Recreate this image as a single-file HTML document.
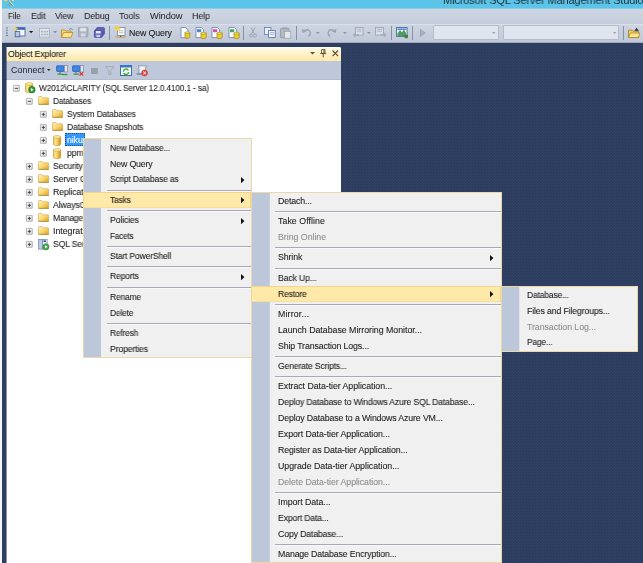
<!DOCTYPE html>
<html lang="en"><head><meta charset="utf-8"><title>Microsoft SQL Server Management Studio</title>
<style>
html,body{margin:0;padding:0;background:#2b3c5e;}
body{width:643px;height:563px;overflow:hidden;position:relative;font-family:"Liberation Sans",sans-serif;font-size:8.8px;color:#1b1b1b;}
#app{position:absolute;left:0;top:0;width:643px;height:563px;overflow:hidden;background-color:#2b3c5e;
 background-image:radial-gradient(circle at 25% 25%, rgba(74,94,130,0.22) 0.4px, rgba(0,0,0,0) 0.9px),radial-gradient(circle at 75% 75%, rgba(74,94,130,0.22) 0.4px, rgba(0,0,0,0) 0.9px);background-size:3px 3px;}
.t{position:absolute;transform-origin:0 50%;white-space:pre;line-height:12px;height:12px;will-change:transform;-webkit-text-stroke:0.09px currentColor;}
.ic{position:absolute;overflow:visible;}
.lb{position:absolute;left:0;top:0;width:2px;height:563px;background:#f4f6f9;}
.titlebar{position:absolute;left:2px;top:0;right:0;height:9px;background:linear-gradient(#5cc4e8 8px,#86cde6 8px);}
.appico{position:absolute;left:3px;top:0;width:14px;height:8px;}
.menubar{position:absolute;left:2px;top:9px;right:0;height:34px;background:linear-gradient(#d0d7e3,#c4cbda 15px,#c2c9d8 33px,#a3acc0 33px);}
.toolbar{position:absolute;left:3px;top:24px;right:0;height:19px;border-radius:2px 0 0 2px;background:linear-gradient(#dae0ea 1px,#cdd4e1 1px,#c1c9d9 18px,#a3acc0 18px);}
.vsep{position:absolute;width:1px;background:#8791a6;}
.combo{position:absolute;top:25px;height:15px;background:#dfe4ee;border:0.7px solid #b4bccb;box-sizing:border-box;border-radius:1px;}
.oe{position:absolute;left:6px;top:47px;width:335px;height:520px;background:#fff;border-radius:2px 2px 0 0;overflow:hidden;}
.oel{position:absolute;left:6px;top:48px;width:1px;height:520px;background:#2a3a5c;opacity:.55;z-index:1;}
.oetitle{position:absolute;left:0;top:0;right:0;height:14px;background:linear-gradient(#fffcf0,#fff3cd 45%,#ffe8a6);}
.oetb{position:absolute;left:0;top:14px;right:0;height:19px;background:linear-gradient(#bec8da 18px,#b4bccb 18px);}
.tree{position:absolute;left:0;top:33px;right:0;bottom:0;background:#fff;}
.sel{position:absolute;background:#3399ff;outline:1px dotted #1d4f8f;outline-offset:-1px;}
.menu{position:absolute;background:#f0f0f0;box-sizing:border-box;border:1px solid #ead9a4;}
.mg{position:absolute;background:#bcc7d9;}
.sep{position:absolute;height:1px;background:#a4aab8;box-shadow:0 1px 0 rgba(255,255,255,.55);}
.hl{position:absolute;height:16px;background:#ffe9a8;border:1px solid #f2d58c;border-bottom-color:rgba(242,213,140,.55);box-sizing:border-box;}
</style></head>
<body><svg width="0" height="0" style="position:absolute"><defs><linearGradient id="gf" x1="0" y1="0" x2="1" y2="1"><stop offset="0" stop-color="#fff3c0"/><stop offset="0.5" stop-color="#fbd870"/><stop offset="1" stop-color="#dc9d2a"/></linearGradient><linearGradient id="gd" x1="0" y1="0" x2="1" y2="0"><stop offset="0" stop-color="#eebb44"/><stop offset="0.3" stop-color="#fbe7a0"/><stop offset="0.62" stop-color="#f0c048"/><stop offset="1" stop-color="#c98a18"/></linearGradient><linearGradient id="ge" x1="0" y1="0" x2="1" y2="1"><stop offset="0" stop-color="#ffffff"/><stop offset="1" stop-color="#d6d6d6"/></linearGradient></defs></svg><div id="app"><div class="lb"></div><div class="titlebar"></div><div class="appico"><svg width="14" height="8" viewBox="0 0 14 8"><rect x="1" y="0" width="3.4" height="1.2" fill="#e8d36a"/><path d="M1.4 3 V5.4" stroke="#7fd0a0" stroke-width="0.8" stroke-dasharray="0.8 0.8"/><path d="M5.6 5.4 L10 0.2" stroke="#b79a45" stroke-width="1.3"/><path d="M9.4 0.6 L10.4 -0.4" stroke="#f4f8fa" stroke-width="1.6"/><path d="M6.4 0.8 L10.4 5.6" stroke="#eef4f7" stroke-width="1"/><path d="M6 1.6 L9.6 5.8" stroke="#3a6a80" stroke-width="0.5"/></svg></div><span class="t" style="left:442.70px;top:-6.00px;letter-spacing:-0.16px;color:#1c2f3a;font-size:11.2px;transform:scaleX(0.9839);-webkit-text-stroke:0;">Microsoft SQL Server Management Studio</span><div class="menubar"></div><span class="t" style="left:7.50px;top:10.00px;letter-spacing:-0.16px;font-size:9.3px;transform:scaleX(0.8784);-webkit-text-stroke:0;">File</span><span class="t" style="left:30.50px;top:10.00px;letter-spacing:-0.16px;font-size:9.3px;transform:scaleX(0.9486);-webkit-text-stroke:0;">Edit</span><span class="t" style="left:55.10px;top:10.00px;letter-spacing:-0.16px;font-size:9.3px;transform:scaleX(0.9512);-webkit-text-stroke:0;">View</span><span class="t" style="left:83.50px;top:10.00px;letter-spacing:-0.16px;font-size:9.3px;transform:scaleX(0.9622);-webkit-text-stroke:0;">Debug</span><span class="t" style="left:119.00px;top:10.00px;letter-spacing:-0.16px;font-size:9.3px;transform:scaleX(0.9759);-webkit-text-stroke:0;">Tools</span><span class="t" style="left:149.60px;top:10.00px;letter-spacing:-0.113px;font-size:9.3px;-webkit-text-stroke:0;">Window</span><span class="t" style="left:191.50px;top:10.00px;letter-spacing:-0.16px;font-size:9.3px;transform:scaleX(0.9684);-webkit-text-stroke:0;">Help</span><div class="toolbar"></div><svg class="ic" style="left:5.6px;top:27.2px" width="2" height="10" viewBox="0 0 2 10"><rect x="0.3" y="0.3" width="1.3" height="1.3" fill="#5d6b85"/><rect x="0.3" y="2.8" width="1.3" height="1.3" fill="#5d6b85"/><rect x="0.3" y="5.3" width="1.3" height="1.3" fill="#5d6b85"/><rect x="0.3" y="7.8" width="1.3" height="1.3" fill="#5d6b85"/></svg><svg class="ic" style="left:13px;top:26.4px" width="12.5" height="11.5" viewBox="0 0 12.5 11.5"><rect x="3" y="1.6" width="9" height="8.4" fill="#f4f7fc" stroke="#4d6ea8" stroke-width="0.9"/><rect x="3" y="1.6" width="9" height="2.2" fill="#3a66b5"/><rect x="2.2" y="5.6" width="4.6" height="5.2" fill="#b7c6e6" stroke="#4b5f94" stroke-width="0.8"/><path d="M2.6 0 L3.5 1.9 L5.4 2.6 L3.5 3.4 L2.6 5.2 L1.8 3.4 L0 2.6 L1.8 1.9 Z" fill="#f6cf4a"/></svg><svg class="ic" style="left:28.9px;top:31.050000000000004px" width="4.2" height="2.3" viewBox="0 0 4.2 2.3"><path d="M0 0 H4.2 L2.1 2.3 Z" fill="#1b1b1b"/></svg><svg class="ic" style="left:38.5px;top:27.8px" width="11" height="9.6" viewBox="0 0 11 9.6"><rect x="0.4" y="0.4" width="10.2" height="8.8" fill="#dfe3ea" stroke="#a9b0be" stroke-width="0.8"/><g fill="#a3aab8"><rect x="2" y="3" width="1.8" height="1.4"/><rect x="4.8" y="3" width="1.8" height="1.4"/><rect x="7.5" y="3" width="1.8" height="1.4"/><rect x="2" y="5.8" width="1.8" height="1.4"/><rect x="4.8" y="5.8" width="1.8" height="1.4"/><rect x="7.5" y="5.8" width="1.8" height="1.4"/></g></svg><svg class="ic" style="left:52.699999999999996px;top:31.050000000000004px" width="4.2" height="2.3" viewBox="0 0 4.2 2.3"><path d="M0 0 H4.2 L2.1 2.3 Z" fill="#8b93a3"/></svg><svg class="ic" style="left:61px;top:26.6px" width="12.5" height="11.2" viewBox="0 0 12.5 11.2"><path d="M0.5 10.5 V3 H4 L5 4 H10 V5.5" fill="#f5d572" stroke="#b98a2a" stroke-width="0.8"/><path d="M0.5 10.5 L2.6 5.5 H12 L10 10.5 Z" fill="#fbe28d" stroke="#b98a2a" stroke-width="0.8"/><path d="M8.2 2.4 Q10 0.4 11.6 2.6" fill="none" stroke="#5b7fb8" stroke-width="0.9"/></svg><svg class="ic" style="left:78px;top:27.4px" width="10.4" height="10.2" viewBox="0 0 10.4 10.2"><rect x="0.4" y="0.4" width="9.6" height="9.4" rx="0.8" fill="#aeb4c0" stroke="#9198a6" stroke-width="0.7"/><rect x="2.2" y="0.8" width="6" height="3.6" fill="#e2e5ea"/><rect x="2.8" y="6.2" width="4.8" height="3.4" fill="#d2d6dd"/></svg><svg class="ic" style="left:93.6px;top:26.8px" width="11" height="11" viewBox="0 0 11 11"><rect x="2.6" y="0.6" width="7.8" height="7" rx="0.8" fill="#6d74c9" stroke="#3c3f94" stroke-width="0.7"/><rect x="1.4" y="2" width="7.8" height="7" rx="0.8" fill="#7a82d6" stroke="#3c3f94" stroke-width="0.7"/><rect x="0.4" y="3.4" width="7.8" height="7" rx="0.8" fill="#6a72cc" stroke="#33368a" stroke-width="0.7"/><rect x="2" y="4" width="4.6" height="2.4" fill="#e8eaf8"/><rect x="2.4" y="8" width="3.6" height="2.2" fill="#c9cdef"/></svg><div class="vsep" style="left:108.9px;top:26px;height:13.5px"></div><svg class="ic" style="left:113.6px;top:26.2px" width="12.6" height="12.4" viewBox="0 0 12.6 12.4"><rect x="3.4" y="1.6" width="7.6" height="8" fill="#f7f8fb" stroke="#7d8594" stroke-width="0.8"/><path d="M5 4.6 H9.5 M5 6.4 H9.5" stroke="#a8afbd" stroke-width="0.7"/><circle cx="3.4" cy="2.6" r="2.5" fill="#f7d23e"/><path d="M1.4 11 H12 " stroke="#c89a2c" stroke-width="1"/><path d="M6.6 9.6 V11" stroke="#555" stroke-width="1"/></svg><svg class="ic" style="left:180px;top:26.6px" width="10.4" height="11.6" viewBox="0 0 10.4 11.6"><path d="M1 0.5 H5.6 L8 2.9 V10.8 H1 Z" fill="#fbfcfe" stroke="#6d7fa6" stroke-width="0.8"/><path d="M5 5.6 h4.8 v4.6 a2.4 1 0 0 1 -4.8 0 Z" fill="#f0cf1e" stroke="#8a7412" stroke-width="0.6"/><ellipse cx="7.4" cy="5.8" rx="2.4" ry="1" fill="#fbe96a" stroke="#8a7412" stroke-width="0.5"/></svg><svg class="ic" style="left:195px;top:26.6px" width="12" height="11.6" viewBox="0 0 12 11.6"><path d="M1 0.5 H6.4 L8.6 2.7 V10.6 H1 Z" fill="#fbfcfe" stroke="#6d7fa6" stroke-width="0.8"/><rect x="2" y="2.2" width="4.2" height="3" fill="#4a86d8"/><path d="M6 6.2 h5.2 v4.4 a2.6 1 0 0 1 -5.2 0 Z" fill="#f0cf1e" stroke="#8a7412" stroke-width="0.6"/><ellipse cx="8.6" cy="6.2" rx="2.6" ry="1" fill="#fbe96a" stroke="#8a7412" stroke-width="0.5"/></svg><svg class="ic" style="left:211.2px;top:26.6px" width="12" height="11.6" viewBox="0 0 12 11.6"><path d="M1 0.5 H6.4 L8.6 2.7 V10.6 H1 Z" fill="#fbfcfe" stroke="#6d7fa6" stroke-width="0.8"/><rect x="2" y="2.2" width="4.2" height="3" fill="#d64bc0"/><path d="M6 6.2 h5.2 v4.4 a2.6 1 0 0 1 -5.2 0 Z" fill="#f0cf1e" stroke="#8a7412" stroke-width="0.6"/><ellipse cx="8.6" cy="6.2" rx="2.6" ry="1" fill="#fbe96a" stroke="#8a7412" stroke-width="0.5"/></svg><svg class="ic" style="left:227.8px;top:26.6px" width="12" height="11.6" viewBox="0 0 12 11.6"><path d="M1 0.5 H6.4 L8.6 2.7 V10.6 H1 Z" fill="#fbfcfe" stroke="#6d7fa6" stroke-width="0.8"/><rect x="2" y="2.2" width="4.2" height="3" fill="#4ea65a"/><path d="M6 6.2 h5.2 v4.4 a2.6 1 0 0 1 -5.2 0 Z" fill="#f0cf1e" stroke="#8a7412" stroke-width="0.6"/><ellipse cx="8.6" cy="6.2" rx="2.6" ry="1" fill="#fbe96a" stroke="#8a7412" stroke-width="0.5"/></svg><div class="vsep" style="left:242.8px;top:26px;height:13.5px"></div><svg class="ic" style="left:249.4px;top:27px" width="8" height="11" viewBox="0 0 8 11"><path d="M2 0.5 L5.4 7 M6 0.5 L2.6 7" stroke="#9aa1af" stroke-width="0.9" fill="none"/><circle cx="2" cy="8.6" r="1.5" fill="none" stroke="#9aa1af" stroke-width="0.9"/><circle cx="6" cy="8.6" r="1.5" fill="none" stroke="#9aa1af" stroke-width="0.9"/></svg><svg class="ic" style="left:264px;top:27px" width="12" height="11" viewBox="0 0 12 11"><rect x="0.5" y="0.5" width="6.4" height="7" fill="#e9edf5" stroke="#5f7fb5" stroke-width="0.8"/><rect x="4.6" y="3.4" width="6.6" height="7" fill="#f3f6fb" stroke="#4c6ea8" stroke-width="0.8"/><path d="M6 5.6 H10 M6 7.4 H10" stroke="#7d9acb" stroke-width="0.7"/></svg><svg class="ic" style="left:280.4px;top:26.6px" width="11.4" height="11.6" viewBox="0 0 11.4 11.6"><rect x="0.5" y="1.4" width="8.6" height="9.4" rx="0.8" fill="#b5b9c2" stroke="#8e95a3" stroke-width="0.8"/><rect x="2.6" y="0.4" width="4.4" height="2" fill="#9da3b0"/><rect x="4.6" y="4.4" width="6.2" height="6.8" fill="#e6e8ee" stroke="#979dac" stroke-width="0.7"/></svg><div class="vsep" style="left:295.79999999999995px;top:26px;height:13.5px"></div><svg class="ic" style="left:301.6px;top:28px" width="9.4" height="9" viewBox="0 0 9.4 9"><path d="M1 3.4 Q5 0.4 7.6 3 Q9.4 5.6 6.4 8.4" fill="none" stroke="#9aa2b2" stroke-width="1.3"/><path d="M0 0.8 L0.6 5 L4.4 3.6 Z" fill="#9aa2b2"/></svg><svg class="ic" style="left:315.70000000000005px;top:31.55px" width="3.8" height="2.1" viewBox="0 0 3.8 2.1"><path d="M0 0 H3.8 L1.9 2.1 Z" fill="#8b93a3"/></svg><svg class="ic" style="left:327.2px;top:28px" width="9.4" height="9" viewBox="0 0 9.4 9"><path d="M8.4 3.4 Q4.4 0.4 1.8 3 Q0 5.6 3 8.4" fill="none" stroke="#9aa2b2" stroke-width="1.3"/><path d="M9.4 0.8 L8.8 5 L5 3.6 Z" fill="#9aa2b2"/></svg><svg class="ic" style="left:343.3px;top:31.55px" width="3.8" height="2.1" viewBox="0 0 3.8 2.1"><path d="M0 0 H3.8 L1.9 2.1 Z" fill="#8b93a3"/></svg><svg class="ic" style="left:352px;top:27px" width="12" height="11" viewBox="0 0 12 11"><rect x="3.4" y="0.5" width="7.6" height="7.6" fill="#d9dde6" stroke="#99a0b0" stroke-width="0.8"/><path d="M0.4 8 L3.6 5.4 V7 H7 V9 H3.6 V10.6 Z" fill="#a7aebd"/><path d="M5 2.4 H9.4 M5 4.2 H9.4" stroke="#a0a7b6" stroke-width="0.7"/></svg><svg class="ic" style="left:367.1px;top:31.55px" width="3.8" height="2.1" viewBox="0 0 3.8 2.1"><path d="M0 0 H3.8 L1.9 2.1 Z" fill="#8b93a3"/></svg><svg class="ic" style="left:375px;top:27px" width="12.4" height="11" viewBox="0 0 12.4 11"><rect x="0.5" y="0.5" width="8" height="7.6" fill="#d9dde6" stroke="#99a0b0" stroke-width="0.8"/><path d="M12 8 L8.8 5.4 V7 H5.4 V9 H8.8 V10.6 Z" fill="#a7aebd"/><path d="M2 2.4 H7 M2 4.2 H7" stroke="#a0a7b6" stroke-width="0.7"/></svg><div class="vsep" style="left:390.9px;top:26px;height:13.5px"></div><svg class="ic" style="left:396px;top:26.8px" width="12.4" height="11.6" viewBox="0 0 12.4 11.6"><rect x="0.5" y="0.5" width="10.6" height="9" fill="#e8f0f8" stroke="#4b6d9e" stroke-width="0.9"/><path d="M1.4 6.6 L4 3 L6 5.6 L8 2.6 L10.4 6.8 V9 H1.4 Z" fill="#4f9a62"/><rect x="1.4" y="1.4" width="9" height="1.6" fill="#5a8fd0"/><rect x="8.6" y="8" width="3.2" height="3.2" fill="#3e7e3a"/></svg><div class="vsep" style="left:412.0px;top:26px;height:13.5px"></div><svg class="ic" style="left:420.2px;top:28.6px" width="5.6" height="8" viewBox="0 0 5.6 8"><path d="M0.4 0.4 L5.2 4 L0.4 7.6 Z" fill="#a9b0be" stroke="#8f97a8" stroke-width="0.6"/></svg><div class="combo" style="left:433px;width:65.5px"></div><svg class="ic" style="left:492.1px;top:31.799999999999997px" width="3.4" height="2" viewBox="0 0 3.4 2"><path d="M0 0 H3.4 L1.7 2 Z" fill="#9aa2b2"/></svg><div class="combo" style="left:503.4px;width:115.4px"></div><svg class="ic" style="left:612.5px;top:31.799999999999997px" width="3.4" height="2" viewBox="0 0 3.4 2"><path d="M0 0 H3.4 L1.7 2 Z" fill="#9aa2b2"/></svg><div class="vsep" style="left:623.0px;top:26px;height:13.5px"></div><svg class="ic" style="left:627.6px;top:26.8px" width="12" height="11.4" viewBox="0 0 12 11.4"><path d="M0.5 10.6 V3.2 H4 L5 4.2 H10.6 V10.6 Z" fill="#f3cf5e" stroke="#a57c22" stroke-width="0.8"/><path d="M0.5 10.6 L2.4 6 H11.6 L10.6 10.6 Z" fill="#fbe38c" stroke="#a57c22" stroke-width="0.7"/><path d="M6.4 3.6 L8.4 0.8 L10.8 3.2 L9 4.2 Z" fill="#3a3f4d"/></svg><span class="t" style="left:128.50px;top:27.00px;letter-spacing:-0.122px;">New Query</span><div class="oel"></div><div class="oe"><div class="oetitle"></div><div class="oetb"></div><div class="tree"></div></div><span class="t" style="left:7.70px;top:48.00px;letter-spacing:-0.16px;transform:scaleX(0.9927);">Object Explorer</span><span class="t" style="left:11.40px;top:64.00px;letter-spacing:0.133px;color:#26303f;">Connect</span><svg class="ic" style="left:46.5px;top:69.35000000000001px" width="3.6" height="2.1" viewBox="0 0 3.6 2.1"><path d="M0 0 H3.6 L1.8 2.1 Z" fill="#222"/></svg><svg class="ic" style="left:56px;top:64.8px" width="12.2" height="11.2" viewBox="0 0 12.2 11.2"><rect x="0.6" y="0.8" width="7.2" height="5.6" rx="0.6" fill="#3f86e6" stroke="#2a5cad" stroke-width="0.8"/><rect x="8.6" y="0.4" width="2.8" height="6.6" fill="#dfe6f2" stroke="#6d7c98" stroke-width="0.6"/><path d="M1.4 9.2 H7.2" stroke="#2e9a3a" stroke-width="1.2"/><path d="M4 6.6 V8.6" stroke="#4d5a75" stroke-width="1"/><path d="M6.4 9.6 H11.4" stroke="#2e9a3a" stroke-width="1.2"/></svg><svg class="ic" style="left:72.4px;top:64.8px" width="12.2" height="11.2" viewBox="0 0 12.2 11.2"><rect x="0.6" y="0.8" width="7.2" height="5.6" rx="0.6" fill="#3f86e6" stroke="#2a5cad" stroke-width="0.8"/><rect x="8.6" y="0.4" width="2.8" height="6.6" fill="#dfe6f2" stroke="#6d7c98" stroke-width="0.6"/><path d="M1.4 9.2 H7.2" stroke="#2e9a3a" stroke-width="1.2"/><path d="M4 6.6 V8.6" stroke="#4d5a75" stroke-width="1"/><path d="M7.6 7.2 L11.2 10.6 M11.2 7.2 L7.6 10.6" stroke="#e03a2a" stroke-width="1.2"/></svg><svg class="ic" style="left:90.6px;top:67.6px" width="6.8" height="6" viewBox="0 0 6.8 6"><rect x="0.3" y="0.3" width="6.2" height="5.4" fill="#9aa0ab" stroke="#8a909c" stroke-width="0.5"/></svg><svg class="ic" style="left:105.4px;top:65.8px" width="9.6" height="9" viewBox="0 0 9.6 9"><path d="M0.5 0.6 H9 L5.8 4.4 V8.4 H3.8 V4.4 Z" fill="#c3c9d4" stroke="#9aa1b0" stroke-width="0.8"/></svg><svg class="ic" style="left:120.2px;top:64.8px" width="12" height="11" viewBox="0 0 12 11"><rect x="0.5" y="0.5" width="11" height="10" fill="#f4fbef" stroke="#2f5fae" stroke-width="0.9"/><rect x="0.5" y="0.5" width="11" height="2" fill="#3d76cf"/><path d="M3.4 6.6 A2.7 2.7 0 0 1 8.4 5.4 M8.6 7 A2.7 2.7 0 0 1 3.6 8.2" fill="none" stroke="#3fa23a" stroke-width="1.4"/></svg><svg class="ic" style="left:136.2px;top:64.6px" width="12.4" height="11.6" viewBox="0 0 12.4 11.6"><path d="M2 0.8 H10.6 Q9 2 9.6 3.4 V8.4 H3 V2.6 Q3 1.2 2 0.8 Z" fill="#f1f3f8" stroke="#7f8ba5" stroke-width="0.8"/><path d="M0.6 9 H8" stroke="#7f8ba5" stroke-width="1.6"/><circle cx="8.6" cy="8" r="3" fill="#e04848" stroke="#c03030" stroke-width="0.5"/><path d="M7.3 6.7 L9.9 9.3 M9.9 6.7 L7.3 9.3" stroke="#fff" stroke-width="0.9"/></svg><svg class="ic" style="left:309.7px;top:52.300000000000004px" width="5" height="2.6" viewBox="0 0 5 2.6"><path d="M0 0 H5 L2.5 2.6 Z" fill="#5c4e26"/></svg><svg class="ic" style="left:320.4px;top:49.4px" width="6.4" height="8.6" viewBox="0 0 6.4 8.6"><path d="M1.6 0.6 H5 V4.4 H1.6 Z M4 0.6 V4.4" fill="none" stroke="#5c4e26" stroke-width="0.9"/><path d="M0.2 4.6 H6.2 M3.2 4.6 V8.4" stroke="#5c4e26" stroke-width="0.9"/></svg><svg class="ic" style="left:332px;top:50.4px" width="6.6" height="6.6" viewBox="0 0 6.6 6.6"><path d="M0.5 0.5 L6.1 6.1 M6.1 0.5 L0.5 6.1" stroke="#5c4e26" stroke-width="1.1"/></svg><svg class="ic" style="left:12.75px;top:85.15px" width="6.7" height="6.7" viewBox="0 0 6.7 6.7"><rect x="0.4" y="0.4" width="5.9" height="5.9" rx="0.3" fill="url(#ge)" stroke="#9c9c9c" stroke-width="0.75"/><path d="M1.7 3.35 H5" stroke="#20243a" stroke-width="0.8"/></svg><svg class="ic" style="left:25px;top:81.9px" width="10.4" height="11.6" viewBox="0 0 10.4 11.6"><path d="M0.5 1.8 V9.2 A3.6 1.5 0 0 0 7.7 9.2 V1.8 Z" fill="url(#gd)" stroke="#c79a2c" stroke-width="0.6"/><ellipse cx="4.1" cy="1.9" rx="3.6" ry="1.4" fill="#fbe9a6" stroke="#c79a2c" stroke-width="0.5"/><circle cx="6.9" cy="7.7" r="3.3" fill="#2f9a35" stroke="#1c6e24" stroke-width="0.6"/><path d="M5.9 6.0 L8.6 7.7 L5.9 9.4 Z" fill="#fff"/></svg><span class="t" style="left:39.10px;top:82.00px;letter-spacing:-0.16px;transform:scaleX(0.9419);">W2012\CLARITY (SQL Server 12.0.4100.1 - sa)</span><svg class="ic" style="left:26.45px;top:98.15px" width="6.7" height="6.7" viewBox="0 0 6.7 6.7"><rect x="0.4" y="0.4" width="5.9" height="5.9" rx="0.3" fill="url(#ge)" stroke="#9c9c9c" stroke-width="0.75"/><path d="M1.7 3.35 H5" stroke="#20243a" stroke-width="0.8"/></svg><svg class="ic" style="left:37.699999999999996px;top:95.8px" width="11.4" height="9" viewBox="0 0 11.4 9"><path d="M0.5 8.2 V1.2 Q0.5 0.5 1.2 0.5 H3.6 L4.8 1.8 H10 Q10.6 1.8 10.6 2.4 V8.2 Z" fill="url(#gf)" stroke="#c9a24a" stroke-width="0.6"/><path d="M0.6 8.5 H10.8" stroke="#a8842e" stroke-width="0.7"/></svg><span class="t" style="left:52.70px;top:95.00px;letter-spacing:-0.16px;transform:scaleX(0.9354);">Databases</span><svg class="ic" style="left:40.25px;top:111.15px" width="6.7" height="6.7" viewBox="0 0 6.7 6.7"><rect x="0.4" y="0.4" width="5.9" height="5.9" rx="0.3" fill="url(#ge)" stroke="#9c9c9c" stroke-width="0.75"/><path d="M1.7 3.35 H5" stroke="#20243a" stroke-width="0.8"/><path d="M3.35 1.7 V5" stroke="#20243a" stroke-width="0.8"/></svg><svg class="ic" style="left:51.699999999999996px;top:108.8px" width="11.4" height="9" viewBox="0 0 11.4 9"><path d="M0.5 8.2 V1.2 Q0.5 0.5 1.2 0.5 H3.6 L4.8 1.8 H10 Q10.6 1.8 10.6 2.4 V8.2 Z" fill="url(#gf)" stroke="#c9a24a" stroke-width="0.6"/><path d="M0.6 8.5 H10.8" stroke="#a8842e" stroke-width="0.7"/></svg><span class="t" style="left:66.50px;top:108.00px;letter-spacing:-0.16px;transform:scaleX(0.9638);">System Databases</span><svg class="ic" style="left:40.25px;top:124.15px" width="6.7" height="6.7" viewBox="0 0 6.7 6.7"><rect x="0.4" y="0.4" width="5.9" height="5.9" rx="0.3" fill="url(#ge)" stroke="#9c9c9c" stroke-width="0.75"/><path d="M1.7 3.35 H5" stroke="#20243a" stroke-width="0.8"/><path d="M3.35 1.7 V5" stroke="#20243a" stroke-width="0.8"/></svg><svg class="ic" style="left:51.699999999999996px;top:121.8px" width="11.4" height="9" viewBox="0 0 11.4 9"><path d="M0.5 8.2 V1.2 Q0.5 0.5 1.2 0.5 H3.6 L4.8 1.8 H10 Q10.6 1.8 10.6 2.4 V8.2 Z" fill="url(#gf)" stroke="#c9a24a" stroke-width="0.6"/><path d="M0.6 8.5 H10.8" stroke="#a8842e" stroke-width="0.7"/></svg><span class="t" style="left:66.50px;top:121.00px;letter-spacing:-0.16px;transform:scaleX(0.9671);">Database Snapshots</span><svg class="ic" style="left:40.25px;top:137.15px" width="6.7" height="6.7" viewBox="0 0 6.7 6.7"><rect x="0.4" y="0.4" width="5.9" height="5.9" rx="0.3" fill="url(#ge)" stroke="#9c9c9c" stroke-width="0.75"/><path d="M1.7 3.35 H5" stroke="#20243a" stroke-width="0.8"/><path d="M3.35 1.7 V5" stroke="#20243a" stroke-width="0.8"/></svg><svg class="ic" style="left:53.0px;top:134.5px" width="8.2" height="11.2" viewBox="0 0 8.2 11.2"><path d="M0.5 1.8 V9.2 A3.6 1.5 0 0 0 7.7 9.2 V1.8 Z" fill="url(#gd)" stroke="#c79a2c" stroke-width="0.6"/><ellipse cx="4.1" cy="1.9" rx="3.6" ry="1.4" fill="#fbe9a6" stroke="#c79a2c" stroke-width="0.5"/></svg><div class="sel" style="left:65px;top:133px;width:20px;height:13px"></div><span class="t" style="left:66.50px;top:134.00px;letter-spacing:-0.121px;color:#fff;">niku</span><svg class="ic" style="left:40.25px;top:150.15px" width="6.7" height="6.7" viewBox="0 0 6.7 6.7"><rect x="0.4" y="0.4" width="5.9" height="5.9" rx="0.3" fill="url(#ge)" stroke="#9c9c9c" stroke-width="0.75"/><path d="M1.7 3.35 H5" stroke="#20243a" stroke-width="0.8"/><path d="M3.35 1.7 V5" stroke="#20243a" stroke-width="0.8"/></svg><svg class="ic" style="left:53.0px;top:147.5px" width="8.2" height="11.2" viewBox="0 0 8.2 11.2"><path d="M0.5 1.8 V9.2 A3.6 1.5 0 0 0 7.7 9.2 V1.8 Z" fill="url(#gd)" stroke="#c79a2c" stroke-width="0.6"/><ellipse cx="4.1" cy="1.9" rx="3.6" ry="1.4" fill="#fbe9a6" stroke="#c79a2c" stroke-width="0.5"/></svg><span class="t" style="left:66.50px;top:147.00px;letter-spacing:-0.16px;transform:scaleX(0.9774);">ppm</span><svg class="ic" style="left:26.45px;top:163.15px" width="6.7" height="6.7" viewBox="0 0 6.7 6.7"><rect x="0.4" y="0.4" width="5.9" height="5.9" rx="0.3" fill="url(#ge)" stroke="#9c9c9c" stroke-width="0.75"/><path d="M1.7 3.35 H5" stroke="#20243a" stroke-width="0.8"/><path d="M3.35 1.7 V5" stroke="#20243a" stroke-width="0.8"/></svg><svg class="ic" style="left:37.699999999999996px;top:160.8px" width="11.4" height="9" viewBox="0 0 11.4 9"><path d="M0.5 8.2 V1.2 Q0.5 0.5 1.2 0.5 H3.6 L4.8 1.8 H10 Q10.6 1.8 10.6 2.4 V8.2 Z" fill="url(#gf)" stroke="#c9a24a" stroke-width="0.6"/><path d="M0.6 8.5 H10.8" stroke="#a8842e" stroke-width="0.7"/></svg><span class="t" style="left:52.70px;top:160.00px;letter-spacing:-0.16px;transform:scaleX(0.9742);">Security</span><svg class="ic" style="left:26.45px;top:176.15px" width="6.7" height="6.7" viewBox="0 0 6.7 6.7"><rect x="0.4" y="0.4" width="5.9" height="5.9" rx="0.3" fill="url(#ge)" stroke="#9c9c9c" stroke-width="0.75"/><path d="M1.7 3.35 H5" stroke="#20243a" stroke-width="0.8"/><path d="M3.35 1.7 V5" stroke="#20243a" stroke-width="0.8"/></svg><svg class="ic" style="left:37.699999999999996px;top:173.8px" width="11.4" height="9" viewBox="0 0 11.4 9"><path d="M0.5 8.2 V1.2 Q0.5 0.5 1.2 0.5 H3.6 L4.8 1.8 H10 Q10.6 1.8 10.6 2.4 V8.2 Z" fill="url(#gf)" stroke="#c9a24a" stroke-width="0.6"/><path d="M0.6 8.5 H10.8" stroke="#a8842e" stroke-width="0.7"/></svg><span class="t" style="left:52.70px;top:173.00px;letter-spacing:-0.16px;transform:scaleX(0.9864);">Server C</span><svg class="ic" style="left:26.45px;top:189.15px" width="6.7" height="6.7" viewBox="0 0 6.7 6.7"><rect x="0.4" y="0.4" width="5.9" height="5.9" rx="0.3" fill="url(#ge)" stroke="#9c9c9c" stroke-width="0.75"/><path d="M1.7 3.35 H5" stroke="#20243a" stroke-width="0.8"/><path d="M3.35 1.7 V5" stroke="#20243a" stroke-width="0.8"/></svg><svg class="ic" style="left:37.699999999999996px;top:186.8px" width="11.4" height="9" viewBox="0 0 11.4 9"><path d="M0.5 8.2 V1.2 Q0.5 0.5 1.2 0.5 H3.6 L4.8 1.8 H10 Q10.6 1.8 10.6 2.4 V8.2 Z" fill="url(#gf)" stroke="#c9a24a" stroke-width="0.6"/><path d="M0.6 8.5 H10.8" stroke="#a8842e" stroke-width="0.7"/></svg><span class="t" style="left:52.70px;top:186.00px;letter-spacing:-0.16px;transform:scaleX(0.9898);">Replicat</span><svg class="ic" style="left:26.45px;top:202.15px" width="6.7" height="6.7" viewBox="0 0 6.7 6.7"><rect x="0.4" y="0.4" width="5.9" height="5.9" rx="0.3" fill="url(#ge)" stroke="#9c9c9c" stroke-width="0.75"/><path d="M1.7 3.35 H5" stroke="#20243a" stroke-width="0.8"/><path d="M3.35 1.7 V5" stroke="#20243a" stroke-width="0.8"/></svg><svg class="ic" style="left:37.699999999999996px;top:199.8px" width="11.4" height="9" viewBox="0 0 11.4 9"><path d="M0.5 8.2 V1.2 Q0.5 0.5 1.2 0.5 H3.6 L4.8 1.8 H10 Q10.6 1.8 10.6 2.4 V8.2 Z" fill="url(#gf)" stroke="#c9a24a" stroke-width="0.6"/><path d="M0.6 8.5 H10.8" stroke="#a8842e" stroke-width="0.7"/></svg><span class="t" style="left:52.70px;top:199.00px;letter-spacing:-0.16px;transform:scaleX(0.9817);">AlwaysO</span><svg class="ic" style="left:26.45px;top:215.15px" width="6.7" height="6.7" viewBox="0 0 6.7 6.7"><rect x="0.4" y="0.4" width="5.9" height="5.9" rx="0.3" fill="url(#ge)" stroke="#9c9c9c" stroke-width="0.75"/><path d="M1.7 3.35 H5" stroke="#20243a" stroke-width="0.8"/><path d="M3.35 1.7 V5" stroke="#20243a" stroke-width="0.8"/></svg><svg class="ic" style="left:37.699999999999996px;top:212.8px" width="11.4" height="9" viewBox="0 0 11.4 9"><path d="M0.5 8.2 V1.2 Q0.5 0.5 1.2 0.5 H3.6 L4.8 1.8 H10 Q10.6 1.8 10.6 2.4 V8.2 Z" fill="url(#gf)" stroke="#c9a24a" stroke-width="0.6"/><path d="M0.6 8.5 H10.8" stroke="#a8842e" stroke-width="0.7"/></svg><span class="t" style="left:52.70px;top:212.00px;letter-spacing:-0.16px;transform:scaleX(0.9796);">Manage</span><svg class="ic" style="left:26.45px;top:228.15px" width="6.7" height="6.7" viewBox="0 0 6.7 6.7"><rect x="0.4" y="0.4" width="5.9" height="5.9" rx="0.3" fill="url(#ge)" stroke="#9c9c9c" stroke-width="0.75"/><path d="M1.7 3.35 H5" stroke="#20243a" stroke-width="0.8"/><path d="M3.35 1.7 V5" stroke="#20243a" stroke-width="0.8"/></svg><svg class="ic" style="left:37.699999999999996px;top:225.8px" width="11.4" height="9" viewBox="0 0 11.4 9"><path d="M0.5 8.2 V1.2 Q0.5 0.5 1.2 0.5 H3.6 L4.8 1.8 H10 Q10.6 1.8 10.6 2.4 V8.2 Z" fill="url(#gf)" stroke="#c9a24a" stroke-width="0.6"/><path d="M0.6 8.5 H10.8" stroke="#a8842e" stroke-width="0.7"/></svg><span class="t" style="left:52.70px;top:225.00px;letter-spacing:-0.037px;">Integrat</span><svg class="ic" style="left:26.45px;top:241.15px" width="6.7" height="6.7" viewBox="0 0 6.7 6.7"><rect x="0.4" y="0.4" width="5.9" height="5.9" rx="0.3" fill="url(#ge)" stroke="#9c9c9c" stroke-width="0.75"/><path d="M1.7 3.35 H5" stroke="#20243a" stroke-width="0.8"/><path d="M3.35 1.7 V5" stroke="#20243a" stroke-width="0.8"/></svg><svg class="ic" style="left:38.0px;top:238.9px" width="11.4" height="11.4" viewBox="0 0 11.4 11.4"><rect x="0.5" y="0.5" width="4" height="9.6" fill="#b9c9e6" stroke="#6f84ad" stroke-width="0.7"/><rect x="4.5" y="0.5" width="4.6" height="9.6" fill="#e9eef7" stroke="#6f84ad" stroke-width="0.7"/><rect x="5.4" y="1.4" width="2.6" height="1.6" fill="#44557a"/><circle cx="8" cy="7.8" r="3.1" fill="#43a948" stroke="#1f7a28" stroke-width="0.5"/><path d="M7 6.2 L9.7 7.8 L7 9.4 Z" fill="#fff"/></svg><span class="t" style="left:52.70px;top:238.00px;letter-spacing:-0.16px;transform:scaleX(0.9829);">SQL Ser</span><div class="menu" style="left:83px;top:138px;width:169px;height:220px"></div><div class="mg" style="left:84px;top:139px;width:17px;height:218px"></div><span class="t" style="left:109.70px;top:142.00px;letter-spacing:-0.16px;transform:scaleX(0.9593);">New Database...</span><span class="t" style="left:109.70px;top:158.00px;letter-spacing:-0.156px;">New Query</span><svg class="ic" style="left:240.80px;top:177.03px" width="3.4" height="6.2" viewBox="0 0 3.4 6.2"><path d="M0 0 L3.4 3.1 L0 6.2 Z" fill="#111"/></svg><span class="t" style="left:109.70px;top:173.00px;letter-spacing:-0.16px;transform:scaleX(0.9587);">Script Database as</span><div class="sep" style="top:190px;left:107px;width:144px"></div><div class="hl" style="left:83px;top:192px;width:168px"></div><svg class="ic" style="left:240.80px;top:197.29px" width="3.4" height="6.2" viewBox="0 0 3.4 6.2"><path d="M0 0 L3.4 3.1 L0 6.2 Z" fill="#111"/></svg><span class="t" style="left:109.70px;top:194.00px;letter-spacing:-0.16px;transform:scaleX(0.9539);">Tasks</span><div class="sep" style="top:210px;left:107px;width:144px"></div><svg class="ic" style="left:240.80px;top:217.55px" width="3.4" height="6.2" viewBox="0 0 3.4 6.2"><path d="M0 0 L3.4 3.1 L0 6.2 Z" fill="#111"/></svg><span class="t" style="left:109.70px;top:214.00px;letter-spacing:-0.16px;transform:scaleX(0.9885);">Policies</span><span class="t" style="left:109.70px;top:230.00px;letter-spacing:-0.16px;transform:scaleX(0.9157);">Facets</span><div class="sep" style="top:246px;left:107px;width:144px"></div><span class="t" style="left:109.70px;top:250.00px;letter-spacing:-0.16px;transform:scaleX(0.9703);">Start PowerShell</span><div class="sep" style="top:266px;left:107px;width:144px"></div><svg class="ic" style="left:240.80px;top:273.98px" width="3.4" height="6.2" viewBox="0 0 3.4 6.2"><path d="M0 0 L3.4 3.1 L0 6.2 Z" fill="#111"/></svg><span class="t" style="left:109.70px;top:270.00px;letter-spacing:-0.16px;transform:scaleX(0.9666);">Reports</span><div class="sep" style="top:287px;left:107px;width:144px"></div><span class="t" style="left:109.70px;top:291.00px;letter-spacing:-0.16px;transform:scaleX(0.9596);">Rename</span><span class="t" style="left:109.70px;top:307.00px;letter-spacing:-0.16px;transform:scaleX(0.9519);">Delete</span><div class="sep" style="top:323px;left:107px;width:144px"></div><span class="t" style="left:109.70px;top:327.00px;letter-spacing:-0.16px;transform:scaleX(0.9464);">Refresh</span><span class="t" style="left:109.70px;top:343.00px;letter-spacing:-0.16px;transform:scaleX(0.9846);">Properties</span><div class="menu" style="left:251px;top:192px;width:251px;height:371px"></div><div class="mg" style="left:252px;top:193px;width:17px;height:369px"></div><div class="mg" style="left:269px;top:193px;width:1px;height:369px;opacity:0.8"></div><span class="t" style="left:277.70px;top:195.00px;letter-spacing:-0.147px;">Detach...</span><div class="sep" style="top:211px;left:275px;width:226px"></div><span class="t" style="left:277.70px;top:215.00px;letter-spacing:0.059px;">Take Offline</span><span class="t" style="left:277.70px;top:231.00px;letter-spacing:-0.027px;color:#8d8d8d;">Bring Online</span><div class="sep" style="top:247px;left:275px;width:226px"></div><svg class="ic" style="left:490.20px;top:255.03px" width="3.4" height="6.2" viewBox="0 0 3.4 6.2"><path d="M0 0 L3.4 3.1 L0 6.2 Z" fill="#111"/></svg><span class="t" style="left:277.70px;top:251.00px;letter-spacing:-0.123px;">Shrink</span><div class="sep" style="top:268px;left:275px;width:226px"></div><span class="t" style="left:277.70px;top:272.00px;letter-spacing:-0.16px;transform:scaleX(0.9848);">Back Up...</span><div class="hl" style="left:251px;top:286px;width:250px"></div><svg class="ic" style="left:490.20px;top:291.21px" width="3.4" height="6.2" viewBox="0 0 3.4 6.2"><path d="M0 0 L3.4 3.1 L0 6.2 Z" fill="#111"/></svg><span class="t" style="left:277.70px;top:288.00px;letter-spacing:-0.16px;transform:scaleX(0.9666);">Restore</span><div class="sep" style="top:304px;left:275px;width:226px"></div><span class="t" style="left:277.70px;top:308.00px;letter-spacing:0.165px;">Mirror...</span><span class="t" style="left:277.70px;top:324.00px;letter-spacing:-0.02px;">Launch Database Mirroring Monitor...</span><span class="t" style="left:277.70px;top:340.00px;letter-spacing:-0.141px;">Ship Transaction Logs...</span><div class="sep" style="top:356px;left:275px;width:226px"></div><span class="t" style="left:277.70px;top:360.00px;letter-spacing:-0.16px;transform:scaleX(0.9758);">Generate Scripts...</span><div class="sep" style="top:376px;left:275px;width:226px"></div><span class="t" style="left:277.70px;top:380.00px;letter-spacing:-0.053px;">Extract Data-tier Application...</span><span class="t" style="left:277.70px;top:396.00px;letter-spacing:-0.16px;transform:scaleX(0.9844);">Deploy Database to Windows Azure SQL Database...</span><span class="t" style="left:277.70px;top:412.00px;letter-spacing:-0.149px;">Deploy Database to a Windows Azure VM...</span><span class="t" style="left:277.70px;top:428.00px;letter-spacing:-0.062px;">Export Data-tier Application...</span><span class="t" style="left:277.70px;top:444.00px;letter-spacing:-0.094px;">Register as Data-tier Application...</span><span class="t" style="left:277.70px;top:460.00px;letter-spacing:-0.027px;">Upgrade Data-tier Application...</span><span class="t" style="left:277.70px;top:476.00px;letter-spacing:-0.062px;color:#8d8d8d;">Delete Data-tier Application...</span><div class="sep" style="top:492px;left:275px;width:226px"></div><span class="t" style="left:277.70px;top:496.00px;letter-spacing:-0.064px;">Import Data...</span><span class="t" style="left:277.70px;top:512.00px;letter-spacing:-0.16px;transform:scaleX(0.9814);">Export Data...</span><span class="t" style="left:277.70px;top:528.00px;letter-spacing:-0.16px;transform:scaleX(0.9935);">Copy Database...</span><div class="sep" style="top:544px;left:275px;width:226px"></div><span class="t" style="left:277.70px;top:548.00px;letter-spacing:-0.16px;transform:scaleX(0.9984);">Manage Database Encryption...</span><div class="menu" style="left:501px;top:286px;width:137px;height:66px"></div><div class="mg" style="left:502px;top:287px;width:17px;height:64px"></div><div class="mg" style="left:519px;top:287px;width:1px;height:64px;opacity:0.3"></div><span class="t" style="left:527.10px;top:289.00px;letter-spacing:-0.16px;transform:scaleX(0.9621);">Database...</span><span class="t" style="left:527.10px;top:305.00px;letter-spacing:-0.16px;transform:scaleX(0.9968);">Files and Filegroups...</span><span class="t" style="left:527.10px;top:321.00px;letter-spacing:-0.061px;color:#8d8d8d;">Transaction Log...</span><span class="t" style="left:527.10px;top:336.00px;letter-spacing:-0.16px;transform:scaleX(0.9488);">Page...</span></div></body></html>
